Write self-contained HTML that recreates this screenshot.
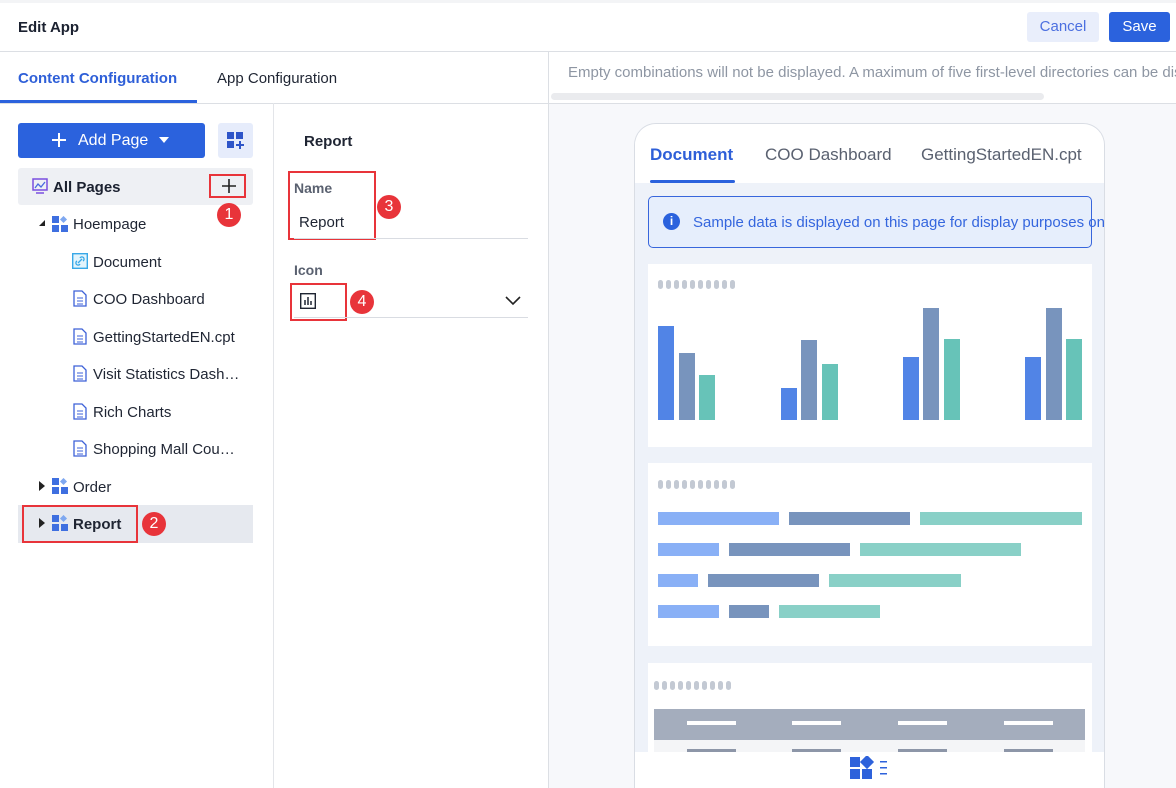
<!DOCTYPE html>
<html><head><meta charset="utf-8">
<style>
*{margin:0;padding:0;box-sizing:border-box}
html{width:1176px;height:788px;overflow:hidden}
body{width:1176px;height:788px;overflow:hidden;background:#fff;font-family:"Liberation Sans",Arial,sans-serif;position:relative;color:#1f2533}
.a{position:absolute}
.t{font-size:15px;white-space:nowrap}
.red{border:2px solid #e8343a}
.badge{position:absolute;width:24px;height:24px;border-radius:50%;background:#e8343a;color:#fff;font-size:16px;text-align:center;line-height:24px}
.doc{position:absolute;width:14px;height:17px}
.bar{position:absolute}
.dots{position:absolute;height:8px;display:flex;gap:3px}
.dots i{display:block;width:5px;height:9px;border-radius:3px;background:#c3c9d3}
</style></head><body>
<div class="a" style="left:0;top:0;width:1176px;height:3px;background:#f3f4f6"></div>
<div class="a t" style="left:18px;top:19px;font-weight:bold;font-size:15px;color:#1b2130">Edit App</div>
<div class="a" style="left:1027px;top:12px;width:72px;height:30px;background:#e9eefb;border-radius:3px;color:#4b6fe0;font-size:15px;text-align:center;line-height:30px">Cancel</div>
<div class="a" style="left:1109px;top:12px;width:61px;height:30px;background:#2b62dd;border-radius:3px;color:#fff;font-size:15px;text-align:center;line-height:30px">Save</div>
<div class="a" style="left:0;top:51px;width:1176px;height:1px;background:#dcdfe4"></div>
<div class="a t" style="left:18px;top:70px;font-weight:bold;color:#2e5fd8">Content Configuration</div>
<div class="a t" style="left:217px;top:70px;color:#1f2533">App Configuration</div>
<div class="a" style="left:0;top:100px;width:197px;height:3px;background:#2b62dd"></div>
<div class="a" style="left:0;top:103px;width:548px;height:1px;background:#dcdfe4"></div>
<div class="a" style="left:273px;top:103px;width:1px;height:685px;background:#e3e5e9"></div>
<div class="a" style="left:548px;top:52px;width:1px;height:736px;background:#dcdfe4"></div>
<div class="a" style="left:549px;top:52px;width:627px;height:51px;background:#fff"></div>
<div class="a t" style="left:568px;top:64px;width:608px;overflow:hidden;color:#8e96a3;font-size:15px">Empty combinations will not be displayed. A maximum of five first-level directories can be displayed</div>
<div class="a" style="left:551px;top:93px;width:493px;height:7px;border-radius:4px;background:#eaebee"></div>
<div class="a" style="left:549px;top:103px;width:627px;height:1px;background:#dcdfe4"></div>
<div class="a" style="left:549px;top:104px;width:627px;height:684px;background:#f7f8fb"></div>
<div class="a" style="left:634px;top:123px;width:471px;height:665px;border:1px solid #d9dde4;border-bottom:none;border-radius:22px 22px 0 0;background:#eef2f9;overflow:hidden">
  <div class="a" style="left:0;top:0;width:471px;height:59px;background:#fff"></div>
  <div class="a t" style="left:15px;top:21px;font-size:17px;font-weight:bold;color:#2e5fd8">Document</div>
  <div class="a t" style="left:130px;top:21px;font-size:17px;color:#5a6170">COO Dashboard</div>
  <div class="a t" style="left:286px;top:21px;font-size:17px;color:#5a6170">GettingStartedEN.cpt</div>
  <div class="a" style="left:15px;top:56px;width:85px;height:3px;background:#2b62dd;border-radius:2px"></div>
  <div class="a" style="left:13px;top:72px;width:444px;height:52px;border:1px solid #3866dc;border-radius:5px;background:#e6eefc"></div>
  <div class="a" style="left:28px;top:89px;width:17px;height:17px;border-radius:50%;background:#2b62dd;color:#fff;font-size:12px;font-weight:bold;text-align:center;line-height:17px">i</div>
  <div class="a t" style="left:58px;top:90px;width:412px;overflow:hidden;color:#3566de;font-size:15px">Sample data is displayed on this page for display purposes only</div>
  <div class="a" style="left:13px;top:140px;width:444px;height:183px;background:#fff"></div>
  <div class="a" style="left:13px;top:339px;width:444px;height:183px;background:#fff"></div>
  <div class="a" style="left:13px;top:539px;width:444px;height:126px;background:#fff"></div>
</div>
<div class="dots" style="left:658px;top:280px"><i></i><i></i><i></i><i></i><i></i><i></i><i></i><i></i><i></i><i></i></div>
<div class="bar" style="left:658px;top:326px;width:16px;height:94px;background:#5184e6"></div>
<div class="bar" style="left:679px;top:353px;width:16px;height:67px;background:#7894bd"></div>
<div class="bar" style="left:699px;top:375px;width:16px;height:45px;background:#67c3b8"></div>
<div class="bar" style="left:781px;top:388px;width:16px;height:32px;background:#5184e6"></div>
<div class="bar" style="left:801px;top:340px;width:16px;height:80px;background:#7894bd"></div>
<div class="bar" style="left:822px;top:364px;width:16px;height:56px;background:#67c3b8"></div>
<div class="bar" style="left:903px;top:357px;width:16px;height:63px;background:#5184e6"></div>
<div class="bar" style="left:923px;top:308px;width:16px;height:112px;background:#7894bd"></div>
<div class="bar" style="left:944px;top:339px;width:16px;height:81px;background:#67c3b8"></div>
<div class="bar" style="left:1025px;top:357px;width:16px;height:63px;background:#5184e6"></div>
<div class="bar" style="left:1046px;top:308px;width:16px;height:112px;background:#7894bd"></div>
<div class="bar" style="left:1066px;top:339px;width:16px;height:81px;background:#67c3b8"></div>

<div class="dots" style="left:658px;top:480px"><i></i><i></i><i></i><i></i><i></i><i></i><i></i><i></i><i></i><i></i></div>
<div class="bar" style="left:658px;top:512px;width:121px;height:13px;background:#89b0f6"></div>
<div class="bar" style="left:789px;top:512px;width:121px;height:13px;background:#7894bd"></div>
<div class="bar" style="left:920px;top:512px;width:162px;height:13px;background:#89d0c7"></div>
<div class="bar" style="left:658px;top:543px;width:61px;height:13px;background:#89b0f6"></div>
<div class="bar" style="left:729px;top:543px;width:121px;height:13px;background:#7894bd"></div>
<div class="bar" style="left:860px;top:543px;width:161px;height:13px;background:#89d0c7"></div>
<div class="bar" style="left:658px;top:574px;width:40px;height:13px;background:#89b0f6"></div>
<div class="bar" style="left:708px;top:574px;width:111px;height:13px;background:#7894bd"></div>
<div class="bar" style="left:829px;top:574px;width:132px;height:13px;background:#89d0c7"></div>
<div class="bar" style="left:658px;top:605px;width:61px;height:13px;background:#89b0f6"></div>
<div class="bar" style="left:729px;top:605px;width:40px;height:13px;background:#7894bd"></div>
<div class="bar" style="left:779px;top:605px;width:101px;height:13px;background:#89d0c7"></div>

<div class="dots" style="left:654px;top:681px"><i></i><i></i><i></i><i></i><i></i><i></i><i></i><i></i><i></i><i></i></div>
<div class="bar" style="left:654px;top:709px;width:431px;height:31px;background:#a4adbd"></div>
<div class="bar" style="left:654px;top:740px;width:431px;height:12px;background:#f4f5f7"></div>
<div class="bar" style="left:687px;top:721px;width:49px;height:4px;background:#fff"></div>
<div class="bar" style="left:792px;top:721px;width:49px;height:4px;background:#fff"></div>
<div class="bar" style="left:898px;top:721px;width:49px;height:4px;background:#fff"></div>
<div class="bar" style="left:1004px;top:721px;width:49px;height:4px;background:#fff"></div>
<div class="bar" style="left:687px;top:749px;width:49px;height:3px;background:#8d96a8"></div>
<div class="bar" style="left:792px;top:749px;width:49px;height:3px;background:#8d96a8"></div>
<div class="bar" style="left:898px;top:749px;width:49px;height:3px;background:#8d96a8"></div>
<div class="bar" style="left:1004px;top:749px;width:49px;height:3px;background:#8d96a8"></div>
<div class="bar" style="left:635px;top:752px;width:469px;height:36px;background:#fff"></div>
<svg class="a" style="left:850px;top:756px" width="40" height="26" viewBox="0 0 40 26"><rect x="0" y="1" width="10" height="10" fill="#2e62db"/><rect x="12" y="1" width="10" height="10" fill="#2e62db" transform="rotate(45 17 6)"/><rect x="0" y="13" width="10" height="10" fill="#2e62db"/><rect x="12" y="13" width="10" height="10" fill="#2e62db"/><rect x="30" y="5" width="7" height="1.5" fill="#2e62db"/><rect x="30" y="11" width="7" height="1.5" fill="#2e62db"/><rect x="30" y="17" width="7" height="1.5" fill="#2e62db"/></svg>

<div class="a" style="left:18px;top:123px;width:187px;height:35px;background:#2b62dd;border-radius:3px;color:#fff"></div>
<svg class="a" style="left:51px;top:132px" width="16" height="16"><path d="M8 1v14M1 8h14" stroke="#fff" stroke-width="2"/></svg>
<div class="a t" style="left:78px;top:132px;color:#fff;font-size:16px">Add Page</div>
<svg class="a" style="left:158px;top:136px" width="12" height="8"><path d="M1 1h10L6 7z" fill="#fff"/></svg>
<div class="a" style="left:218px;top:123px;width:35px;height:35px;background:#e6ecfb;border-radius:3px"></div>
<svg class="a" style="left:227px;top:132px" width="18" height="18"><rect x="0" y="0" width="7" height="7" fill="#2e55c8"/><rect x="9" y="0" width="7" height="7" fill="#2e55c8"/><rect x="0" y="9" width="7" height="7" fill="#2e55c8"/><path d="M13 9v8M9 13h8" stroke="#2e55c8" stroke-width="2"/></svg>
<div class="a" style="left:18px;top:168px;width:235px;height:37px;background:#eef0f4;border-radius:3px"></div>
<svg class="a" style="left:32px;top:178px" width="16" height="16"><rect x="1" y="1" width="14" height="11" fill="none" stroke="#7a4fe0" stroke-width="1.5"/><path d="M3 10l3-4 3 3 4-5" fill="none" stroke="#4a6ae0" stroke-width="1.3"/><path d="M4 15h8" stroke="#7a4fe0" stroke-width="1.5"/></svg>
<div class="a t" style="left:53px;top:179px;font-weight:bold;color:#1b2130">All Pages</div>
<div class="a red" style="left:209px;top:174px;width:37px;height:24px"></div>
<svg class="a" style="left:222px;top:179px" width="14" height="14"><path d="M7 0v14M0 7h14" stroke="#222" stroke-width="1.6"/></svg>
<div class="badge" style="left:217px;top:203px">1</div>

<svg class="a" style="left:38px;top:219px" width="8" height="8"><path d="M7 1v6H1z" fill="#222"/></svg>
<svg class="a" style="left:52px;top:216px" width="17" height="16"><rect x="0" y="0" width="7" height="7" fill="#3e6fe0"/><rect x="9" y="1" width="5" height="5" fill="#7fa8f0" transform="rotate(45 11.5 3.5)"/><rect x="0" y="9" width="7" height="7" fill="#3e6fe0"/><rect x="9" y="9" width="7" height="7" fill="#3e6fe0"/></svg>
<div class="a t" style="left:73px;top:216px">Hoempage</div>

<svg class="a" style="left:72px;top:253px" width="16" height="16"><rect x="0.7" y="0.7" width="14.6" height="14.6" fill="#e3f4fc" stroke="#38a8e8" stroke-width="1.4"/><path d="M6 10l4-4M5 8a2.2 2.2 0 1 0 3 3M11 8a2.2 2.2 0 1 0-3-3" fill="none" stroke="#38a8e8" stroke-width="1.3"/></svg>
<div class="a t" style="left:93px;top:254px">Document</div>
<svg class="doc" style="left:73px;top:290px" viewBox="0 0 14 17"><path d="M1 1h8l4 4v11H1z" fill="none" stroke="#3d62d8" stroke-width="1.3"/><path d="M4 8h6M4 11h6M4 14h6" stroke="#3d62d8" stroke-width="1"/></svg>
<div class="a t" style="left:93px;top:291px">COO Dashboard</div>
<svg class="doc" style="left:73px;top:328px" viewBox="0 0 14 17"><path d="M1 1h8l4 4v11H1z" fill="none" stroke="#3d62d8" stroke-width="1.3"/><path d="M4 8h6M4 11h6M4 14h6" stroke="#3d62d8" stroke-width="1"/></svg>
<div class="a t" style="left:93px;top:329px">GettingStartedEN.cpt</div>
<svg class="doc" style="left:73px;top:365px" viewBox="0 0 14 17"><path d="M1 1h8l4 4v11H1z" fill="none" stroke="#3d62d8" stroke-width="1.3"/><path d="M4 8h6M4 11h6M4 14h6" stroke="#3d62d8" stroke-width="1"/></svg>
<div class="a t" style="left:93px;top:366px">Visit Statistics Dash…</div>
<svg class="doc" style="left:73px;top:403px" viewBox="0 0 14 17"><path d="M1 1h8l4 4v11H1z" fill="none" stroke="#3d62d8" stroke-width="1.3"/><path d="M4 8h6M4 11h6M4 14h6" stroke="#3d62d8" stroke-width="1"/></svg>
<div class="a t" style="left:93px;top:404px">Rich Charts</div>
<svg class="doc" style="left:73px;top:440px" viewBox="0 0 14 17"><path d="M1 1h8l4 4v11H1z" fill="none" stroke="#3d62d8" stroke-width="1.3"/><path d="M4 8h6M4 11h6M4 14h6" stroke="#3d62d8" stroke-width="1"/></svg>
<div class="a t" style="left:93px;top:441px">Shopping Mall Cou…</div>

<svg class="a" style="left:38px;top:481px" width="8" height="10"><path d="M1 0l6 5-6 5z" fill="#222"/></svg>
<svg class="a" style="left:52px;top:478px" width="17" height="16"><rect x="0" y="0" width="7" height="7" fill="#3e6fe0"/><rect x="9" y="1" width="5" height="5" fill="#7fa8f0" transform="rotate(45 11.5 3.5)"/><rect x="0" y="9" width="7" height="7" fill="#3e6fe0"/><rect x="9" y="9" width="7" height="7" fill="#3e6fe0"/></svg>
<div class="a t" style="left:73px;top:479px">Order</div>

<div class="a" style="left:18px;top:505px;width:235px;height:38px;background:#e6e9ef"></div>
<div class="a red" style="left:22px;top:505px;width:116px;height:38px"></div>
<svg class="a" style="left:38px;top:518px" width="8" height="10"><path d="M1 0l6 5-6 5z" fill="#222"/></svg>
<svg class="a" style="left:52px;top:515px" width="17" height="16"><rect x="0" y="0" width="7" height="7" fill="#3e6fe0"/><rect x="9" y="1" width="5" height="5" fill="#7fa8f0" transform="rotate(45 11.5 3.5)"/><rect x="0" y="9" width="7" height="7" fill="#3e6fe0"/><rect x="9" y="9" width="7" height="7" fill="#3e6fe0"/></svg>
<div class="a t" style="left:73px;top:516px;font-weight:bold">Report</div>
<div class="badge" style="left:142px;top:512px">2</div>

<div class="a t" style="left:304px;top:133px;font-weight:bold">Report</div>
<div class="a red" style="left:288px;top:171px;width:88px;height:69px"></div>
<div class="a t" style="left:294px;top:180px;font-weight:bold;color:#5a6170;font-size:14px">Name</div>
<div class="a t" style="left:299px;top:214px">Report</div>
<div class="a" style="left:294px;top:238px;width:234px;height:1px;background:#d9dce2"></div>
<div class="badge" style="left:377px;top:195px">3</div>
<div class="a t" style="left:294px;top:262px;font-weight:bold;color:#5a6170;font-size:14px">Icon</div>
<div class="a red" style="left:290px;top:283px;width:57px;height:38px"></div>
<svg class="a" style="left:300px;top:293px" width="16" height="16"><rect x="0.7" y="0.7" width="14.6" height="14.6" fill="none" stroke="#1f2533" stroke-width="1.4"/><path d="M5 12V7M8 12V4M11 12V8" stroke="#1f2533" stroke-width="1.5"/></svg>
<div class="badge" style="left:350px;top:290px">4</div>
<svg class="a" style="left:505px;top:296px" width="16" height="10"><path d="M1 1l7 7 7-7" fill="none" stroke="#222" stroke-width="1.6"/></svg>
<div class="a" style="left:294px;top:317px;width:234px;height:1px;background:#d9dce2"></div>
</body></html>
